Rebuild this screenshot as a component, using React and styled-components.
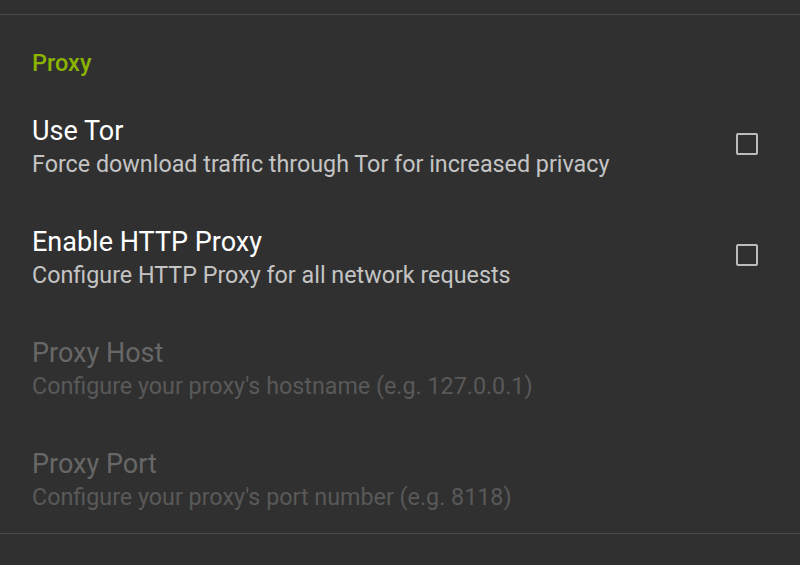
import styled, { createGlobalStyle } from "styled-components";

const GlobalStyle = createGlobalStyle`
  html, body {
    margin: 0;
    padding: 0;
    background: #303030;
  }
  body {
    font-family: Roboto, "Noto Sans", sans-serif;
  }
`;

const Screen = styled.div`
  width: 800px;
  height: 565px;
  background: #303030;
  padding-top: 14px;
  box-sizing: border-box;
  overflow: hidden;
`;

const Divider = styled.div`
  height: 1px;
  background: #4a4a4a;
`;

const CategoryTitle = styled.div`
  padding: 34px 32px 12px;
  font-size: 23.5px;
  line-height: 28px;
  font-weight: 500;
  color: #8bb300;
`;

const Row = styled.div`
  display: flex;
  align-items: center;
  padding: 25px 42px 20px 32px;
`;

const Texts = styled.div`
  flex: 1;
  display: flex;
  flex-direction: column;
`;

const Title = styled.div`
  font-size: 27px;
  line-height: 34px;
  color: ${(p) => (p.disabled ? "#676767" : "#ffffff")};
`;

const Summary = styled.div`
  font-size: 23.3px;
  line-height: 32px;
  color: ${(p) => (p.disabled ? "#595959" : "#c4c4c4")};
`;

const Checkbox = styled.div`
  width: 22px;
  height: 22px;
  margin-bottom: 6px;
  box-sizing: border-box;
  border: 2px solid #bcbcbc;
  border-radius: 2px;
`;

const prefs = [
  {
    title: "Use Tor",
    summary: "Force download traffic through Tor for increased privacy",
    checkbox: true,
  },
  {
    title: "Enable HTTP Proxy",
    summary: "Configure HTTP Proxy for all network requests",
    checkbox: true,
  },
  {
    title: "Proxy Host",
    summary: "Configure your proxy's hostname (e.g. 127.0.0.1)",
    disabled: true,
  },
  {
    title: "Proxy Port",
    summary: "Configure your proxy's port number (e.g. 8118)",
    disabled: true,
  },
];

export default function App() {
  return (
    <>
      <GlobalStyle />
      <Screen>
        <Divider />
        <CategoryTitle>Proxy</CategoryTitle>
        {prefs.map((p) => (
          <Row key={p.title}>
            <Texts>
              <Title disabled={p.disabled}>{p.title}</Title>
              <Summary disabled={p.disabled}>{p.summary}</Summary>
            </Texts>
            {p.checkbox && <Checkbox />}
          </Row>
        ))}
        <Divider />
      </Screen>
    </>
  );
}
